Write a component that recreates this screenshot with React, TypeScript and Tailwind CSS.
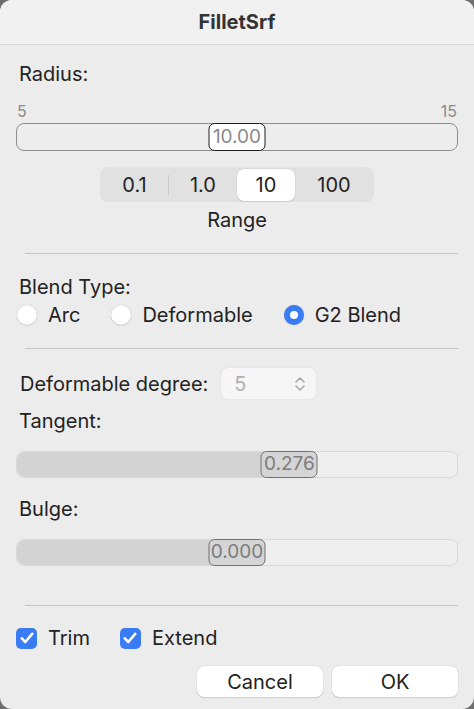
const font = { fontFamily: "Inter, 'Noto Sans', sans-serif" };

const Divider = () => <div className="ml-[9px] h-px bg-[#c4c4c4]" />;

const ValueSlider = ({
  value,
  pct,
  fill,
}: {
  value: string;
  pct: number;
  fill?: boolean;
}) => (
  <div
    className={
      "relative h-full rounded-[8px] border " +
      (fill ? "border-[#d9d9d9] bg-[#efefef]" : "border-[#8e8e8e] border-[1.5px] bg-[#ededed]")
    }
  >
    {fill && (
      <div
        className="absolute inset-y-0 left-0 rounded-l-[8px] bg-[#d3d3d3]"
        style={{ width: `${pct}%` }}
      />
    )}
    <div
      className={
        "absolute top-[-1px] bottom-[-1px] w-[57px] -translate-x-1/2 rounded-[6px] border-[1.5px] flex items-center justify-center text-[19px] " +
        (fill ? "border-[#707070] bg-[#d5d5d5] text-[#7c7c7c]" : "border-[#1e1e1e] bg-white text-[#8a8a8a]")
      }
      style={{ left: `${pct}%` }}
    >
      {value}
    </div>
  </div>
);

const Radio = ({ label, checked }: { label: string; checked?: boolean }) => (
  <div className="flex items-center gap-[11px]">
    {checked ? (
      <div className="w-[20px] h-[20px] rounded-full bg-[#3a7cf4] flex items-center justify-center shadow-[0_0_1px_rgba(0,0,0,0.3)]">
        <div className="w-[8px] h-[8px] rounded-full bg-white" />
      </div>
    ) : (
      <div className="w-[20px] h-[20px] rounded-full bg-white shadow-[0_0_1px_rgba(0,0,0,0.35),0_1px_1px_rgba(0,0,0,0.08)]" />
    )}
    <span>{label}</span>
  </div>
);

const Check = ({ label }: { label: string }) => (
  <div className="flex items-center gap-[11px]">
    <div className="w-[21px] h-[21px] rounded-[5px] bg-[#3a7cf4] flex items-center justify-center">
      <svg width="14" height="12" viewBox="0 0 14 12" fill="none">
        <path d="M1.8 6.4 L5.3 10 L12.2 1.8" stroke="white" strokeWidth="2.6" strokeLinecap="round" strokeLinejoin="round" />
      </svg>
    </div>
    <span>{label}</span>
  </div>
);

export default function App() {
  return (
    <div className="w-[474px] h-[709px] bg-[#6f6f6f] text-[#222] text-[20px]" style={font}>
      <div className="w-full h-full rounded-[12px] overflow-hidden bg-[#ececec] flex flex-col">
        <div className="h-[45px] shrink-0 bg-[#f1f1f1] border-b border-[#d6d6d6] flex items-center justify-center font-bold text-[#333] text-[20px]">
          FilletSrf
        </div>

        <div className="px-[16px] flex flex-col">
          <div className="mt-[17px] h-[24px] leading-[24px] pl-[3px]">Radius:</div>
          <div className="mt-[17px] h-[16px] flex justify-between items-center text-[16px] text-[#8a8a8a] px-[1px]">
            <span>5</span>
            <span>15</span>
          </div>
          <div className="mt-[4px] h-[28px]">
            <ValueSlider value="10.00" pct={50} />
          </div>

          <div className="mt-[16px] h-[35px] self-center w-[274px] rounded-[8px] bg-[#e1e1e1] flex items-center px-[1px] text-[#222]">
            <div className="w-[67px] text-center">0.1</div>
            <div className="w-px h-[20px] bg-[#c9c9c9]" />
            <div className="w-[68px] text-center">1.0</div>
            <div className="w-[58px] h-[32px] rounded-[7px] bg-white shadow-[0_0_1px_rgba(0,0,0,0.25),0_1px_1px_rgba(0,0,0,0.08)] flex items-center justify-center">
              10
            </div>
            <div className="flex-1 text-center">100</div>
          </div>
          <div className="mt-[7px] h-[22px] leading-[22px] text-center">Range</div>

          <div className="mt-[22px]">
            <Divider />
          </div>

          <div className="mt-[21px] h-[24px] leading-[24px] pl-[3px]">Blend Type:</div>
          <div className="mt-[4px] h-[24px] flex items-center gap-[31px] pl-[1px]">
            <Radio label="Arc" />
            <Radio label="Deformable" />
            <Radio label="G2 Blend" checked />
          </div>

          <div className="mt-[21px]">
            <Divider />
          </div>

          <div className="mt-[19px] h-[31px] flex items-center gap-[13px] pl-[4px]">
            <span>Deformable degree:</span>
            <div className="w-[95px] h-[31px] rounded-[6px] bg-[#f6f6f6] shadow-[0_0_1px_rgba(0,0,0,0.2)] flex items-center justify-between pl-[13px] pr-[10px] text-[#b0b0b0]">
              <span>5</span>
              <svg width="12" height="16" viewBox="0 0 12 16" fill="none">
                <path d="M2 6 L6 2 L10 6 M2 10 L6 14 L10 10" stroke="#a9a9a9" strokeWidth="1.6" strokeLinecap="round" strokeLinejoin="round" />
              </svg>
            </div>
          </div>

          <div className="mt-[10px] h-[24px] leading-[24px] pl-[3px]">Tangent:</div>
          <div className="mt-[18px] h-[27px]">
            <ValueSlider value="0.276" pct={61.9} fill />
          </div>

          <div className="mt-[19px] h-[24px] leading-[24px] pl-[3px]">Bulge:</div>
          <div className="mt-[18px] h-[27px]">
            <ValueSlider value="0.000" pct={50} fill />
          </div>

          <div className="mt-[39px]">
            <Divider />
          </div>

          <div className="mt-[21px] h-[22px] flex items-center gap-[30px]">
            <Check label="Trim" />
            <Check label="Extend" />
          </div>

          <div className="mt-[17px] flex justify-end gap-[9px]">
            <button className="w-[126px] h-[31px] rounded-[7px] bg-white shadow-[0_0_1px_rgba(0,0,0,0.3),0_1px_1px_rgba(0,0,0,0.1)] text-[#222]">
              Cancel
            </button>
            <button className="w-[126px] h-[31px] rounded-[7px] bg-white shadow-[0_0_1px_rgba(0,0,0,0.3),0_1px_1px_rgba(0,0,0,0.1)] text-[#222]">
              OK
            </button>
          </div>
        </div>
      </div>
    </div>
  );
}
